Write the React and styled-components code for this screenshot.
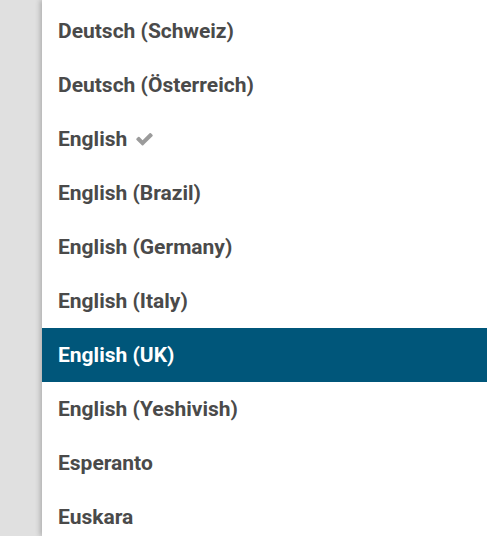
import React from 'react';
import styled, { createGlobalStyle } from 'styled-components';

const GlobalStyle = createGlobalStyle`
  html, body {
    margin: 0;
    padding: 0;
    background: #e0e0e0;
  }
  body {
    font-family: Roboto, "Liberation Sans", Arial, sans-serif;
  }
`;

const Page = styled.div`
  display: flex;
  height: 536px;
  overflow: hidden;
  background: #e0e0e0;
`;

const Menu = styled.ul`
  list-style: none;
  margin: 0 0 0 42px;
  padding: 4px 0 0;
  flex: 1;
  background: #ffffff;
  box-shadow: -2px 0 5px rgba(0, 0, 0, 0.22);
`;

const Item = styled.li`
  display: flex;
  align-items: center;
  gap: 8px;
  height: 54px;
  padding: 0 16px;
  font-size: 21px;
  font-weight: 700;
  line-height: 1;
  color: ${p => (p.$active ? '#ffffff' : '#4a4a4a')};
  background: ${p => (p.$active ? '#00567a' : 'transparent')};
  cursor: pointer;
`;

const Check = styled.svg`
  width: 19px;
  height: 16px;
  fill: #9b9b9b;
  margin-top: 1px;
`;

const languages = [
  { name: 'Deutsch (Schweiz)' },
  { name: 'Deutsch (Österreich)' },
  { name: 'English', checked: true },
  { name: 'English (Brazil)' },
  { name: 'English (Germany)' },
  { name: 'English (Italy)' },
  { name: 'English (UK)', active: true },
  { name: 'English (Yeshivish)' },
  { name: 'Esperanto' },
  { name: 'Euskara' },
];

const App = () => (
  <>
    <GlobalStyle />
    <Page>
      <Menu>
        {languages.map(lang => (
          <Item key={lang.name} $active={lang.active}>
            {lang.name}
            {lang.checked && (
              <Check viewBox="0 0 1792 1408">
                <path d="M1671 274q0 40-28 68l-724 724-136 136q-28 28-68 28t-68-28l-136-136-362-362q-28-28-28-68t28-68l136-136q28-28 68-28t68 28l294 295 656-657q28-28 68-28t68 28l136 136q28 28 28 68z" />
              </Check>
            )}
          </Item>
        ))}
      </Menu>
    </Page>
  </>
);

export default App;
